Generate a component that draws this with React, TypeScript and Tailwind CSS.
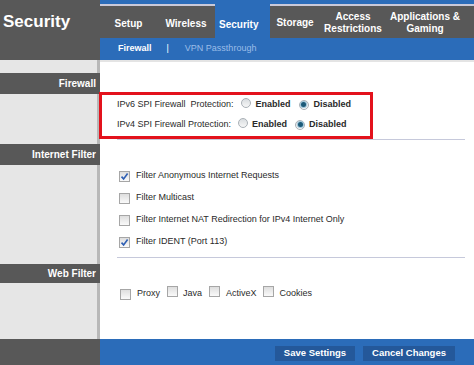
import React from "react";

const DARK = "bg-[#585858]";

function Radio({ checked }: { checked?: boolean }) {
  return (
    <span className="inline-flex h-[10px] w-[10px] shrink-0 items-center justify-center rounded-full border border-[#a9b0b6] bg-[linear-gradient(#d9dde0,#f7f7f7)]">
      {checked && <span className="h-[5px] w-[5px] rounded-full bg-[#1d5a78] shadow-[0_0_0_1px_#9fc6da]" />}
    </span>
  );
}

function Check({ checked }: { checked?: boolean }) {
  return (
    <span className="inline-flex h-[11px] w-[11px] shrink-0 items-center justify-center border border-[#a6a6a6] bg-[linear-gradient(#dedede,#fafafa)]">
      {checked && (
        <svg width="9" height="9" viewBox="0 0 9 9">
          <path d="M1.5 4.6 L3.6 6.9 L7.6 1.6" fill="none" stroke="#2f5fb3" strokeWidth="1.6" />
        </svg>
      )}
    </span>
  );
}

function SideBand({ label, h }: { label: string; h: string }) {
  return (
    <div className={`${DARK} ${h} flex items-center justify-end pr-[4px] text-[10px] font-bold text-white`}>
      {label}
    </div>
  );
}

export default function App() {
  return (
    <div
      className="h-[365px] w-[474px] overflow-hidden bg-white"
      style={{ fontFamily: '"Liberation Sans", Arial, sans-serif' }}
    >
      {/* Header */}
      <div className="flex h-[60px]">
        <div className={`${DARK} w-[100px] pl-[3px] pt-[10px]`}>
          <span className="text-[17px] font-bold leading-none text-white">Security</span>
        </div>
        <div className="flex flex-1 flex-col bg-[#2b6cb9]">
          <div className="flex h-[38px] items-end text-[10px] font-bold text-white">
            <div className={`${DARK} flex h-[34px] border-t-2 border-[#c9c9d9]`}>
              <div className="flex w-[57px] items-center justify-center pt-[2px]">Setup</div>
              <div className="flex w-[58px] items-center justify-center pt-[2px]">Wireless</div>
            </div>
            <div className="flex h-full w-[55px] items-center pl-[4px] pt-[11px]">Security</div>
            <div className={`${DARK} flex h-[34px] flex-1 border-t-2 border-[#c9c9d9] text-center leading-[12px]`}>
              <div className="flex w-[50px] items-center justify-center pt-[2px]">Storage</div>
              <div className="flex w-[66px] items-center justify-center pt-[1px]">
                Access
                <br />
                Restrictions
              </div>
              <div className="flex w-[78px] items-center justify-center pt-[1px]">
                Applications &amp;
                <br />
                Gaming
              </div>
            </div>
          </div>
          <div className="flex h-[22px] items-center pl-[18px] text-[9px]">
            <span className="font-bold text-white">Firewall</span>
            <span className="ml-[15px] text-white">|</span>
            <span className="ml-[16px] text-[#9bbde8]">VPN Passthrough</span>
          </div>
        </div>
      </div>

      {/* Body */}
      <div className="relative text-[9px] text-[#2a2a2a]">
        {/* Firewall section */}
        <div className="flex h-[84px]">
          <div className="w-[100px] bg-[linear-gradient(to_right,#e6e6e6_97px,#b8b8b8_97px)] pt-[13px]">
            <SideBand label="Firewall" h="h-[21px]" />
          </div>
          <div className="flex flex-1 flex-col border-t-2 border-[#e4e4e4] pl-[17px] pr-[9px] pt-[33px]">
            <div className="flex h-[20px] items-center">
              <span className="whitespace-pre">IPv6 SPI Firewall  Protection:</span>
              <span className="ml-[7px]"><Radio /></span>
              <span className="ml-[5px] font-bold">Enabled</span>
              <span className="ml-[8px]"><Radio checked /></span>
              <span className="ml-[5px] font-bold">Disabled</span>
            </div>
            <div className="flex h-[20px] items-center">
              <span>IPv4 SPI Firewall Protection:</span>
              <span className="ml-[7px]"><Radio /></span>
              <span className="ml-[4px] font-bold">Enabled</span>
              <span className="ml-[8px]"><Radio checked /></span>
              <span className="ml-[4px] font-bold">Disabled</span>
            </div>
            <div className="mt-[4px] h-px bg-[#c6c9db]" />
          </div>
        </div>

        {/* Internet Filter section */}
        <div className="flex h-[120px]">
          <div className="w-[100px] bg-[linear-gradient(to_right,#e6e6e6_97px,#b8b8b8_97px)]">
            <SideBand label="Internet Filter" h="h-[21px]" />
          </div>
          <div className="flex flex-1 flex-col pl-[17px] pr-[9px] pt-[21px]">
            {[
              ["Filter Anonymous Internet Requests", true],
              ["Filter Multicast", false],
              ["Filter Internet NAT Redirection for IPv4 Internet Only", false],
              ["Filter IDENT (Port 113)", true],
            ].map(([label, c]) => (
              <div key={label as string} className="flex h-[22px] items-center pl-[2px]">
                <Check checked={c as boolean} />
                <span className="ml-[6px]">{label as string}</span>
              </div>
            ))}
            <div className="mt-[4px] h-px bg-[#c6c9db]" />
          </div>
        </div>

        {/* Web Filter section */}
        <div className="flex h-[75px]">
          <div className="w-[100px] bg-[linear-gradient(to_right,#e6e6e6_97px,#b8b8b8_97px)]">
            <SideBand label="Web Filter" h="h-[19px]" />
          </div>
          <div className="flex flex-1 flex-col pl-[20px] pt-[20px]">
            <div className="flex h-[20px] items-center">
              <Check />
              <span className="ml-[6px]">Proxy</span>
              <span className="ml-[7px]"><Check /></span>
              <span className="ml-[5px]">Java</span>
              <span className="ml-[7px]"><Check /></span>
              <span className="ml-[6px]">ActiveX</span>
              <span className="ml-[6px]"><Check /></span>
              <span className="ml-[6px]">Cookies</span>
            </div>
          </div>
        </div>

        {/* Annotation box */}
        <div className="pointer-events-none absolute left-[99px] top-[32px] h-[47px] w-[274px] border-[3px] border-[#e3121c]" />
      </div>

      {/* Footer */}
      <div className="flex h-[26px]">
        <div className={`${DARK} w-[100px]`} />
        <div className="flex flex-1 justify-end gap-[8px] bg-[#2b6cb9] pr-[19px] pt-[7px]">
          <button className="flex h-[15px] w-[80px] items-center justify-center bg-[#24589a] text-[9.5px] font-bold text-white">
            Save Settings
          </button>
          <button className="flex h-[15px] w-[92px] items-center justify-center bg-[#24589a] text-[9.5px] font-bold text-white">
            Cancel Changes
          </button>
        </div>
      </div>
    </div>
  );
}
